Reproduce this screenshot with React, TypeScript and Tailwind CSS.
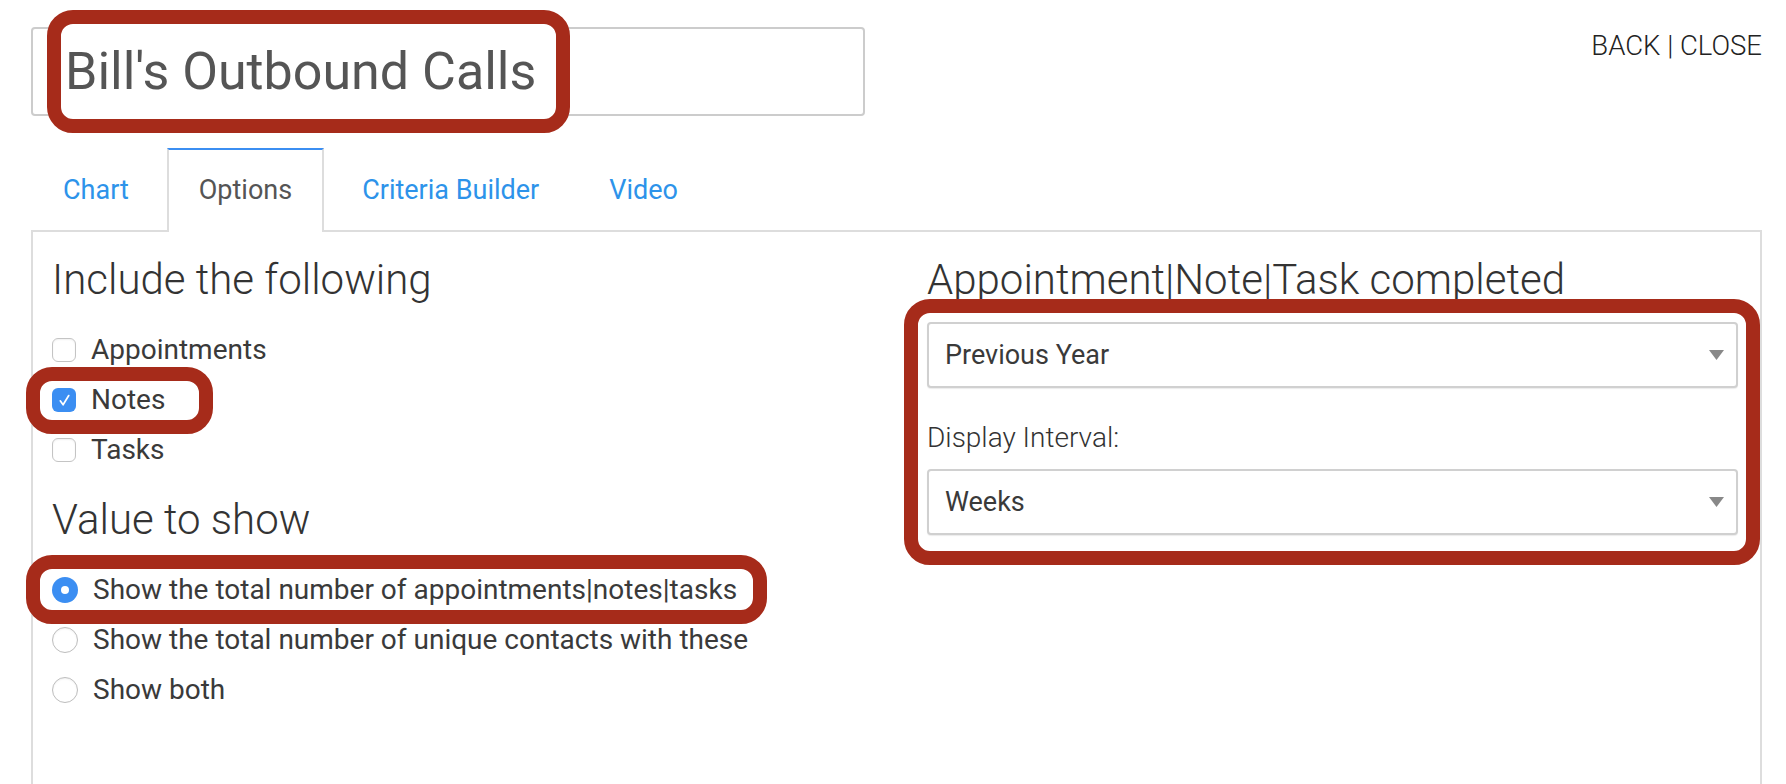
import React from "react";

const red = "border-[#a62b1a]";

function Mark({ className }: { className: string }) {
  // red annotation ring drawn over the screenshot
  return (
    <div
      className={`pointer-events-none absolute rounded-[26px] border-[14px] ${red} bg-white ${className}`}
    />
  );
}

function Checkbox({ checked }: { checked?: boolean }) {
  if (checked) {
    return (
      <span className="relative flex h-[24px] w-[24px] items-center justify-center rounded-[6px] bg-[#3b8ef2]">
        <svg width="17" height="17" viewBox="0 0 24 24" fill="none">
          <path d="M6 12.5l4 5.5L18 5" stroke="#fff" strokeWidth="2.4" strokeLinecap="round" strokeLinejoin="round" />
        </svg>
      </span>
    );
  }
  return (
    <span className="relative h-[24px] w-[24px] rounded-[6px] border border-[#c4c4c4] bg-white shadow-[inset_0_1px_2px_rgba(0,0,0,0.06)]" />
  );
}

function Radio({ checked }: { checked?: boolean }) {
  if (checked) {
    return (
      <span className="relative flex h-[26px] w-[26px] items-center justify-center rounded-full bg-[#3b8ef2]">
        <span className="h-[8px] w-[8px] rounded-full bg-white" />
      </span>
    );
  }
  return (
    <span className="relative h-[26px] w-[26px] rounded-full border border-[#bdbdbd] bg-white shadow-[inset_0_1px_2px_rgba(0,0,0,0.06)]" />
  );
}

function Select({ value }: { value: string }) {
  return (
    <div className="relative flex h-[66px] items-center justify-between rounded-[4px] border-2 border-[#d0d0d0] bg-white pl-[16px] pr-[12px] text-[27px] text-[#3a3a3a] shadow-[0_1px_1px_rgba(0,0,0,0.08)]">
      <span>{value}</span>
      <svg width="15" height="10" viewBox="0 0 15 10">
        <polygon points="0,0 15,0 7.5,10" fill="#888" />
      </svg>
    </div>
  );
}

const tabs = ["Chart", "Options", "Criteria Builder", "Video"];

export default function App() {
  return (
    <div className="h-[784px] w-[1786px] overflow-hidden bg-white font-[Roboto,Arial,sans-serif]">
      {/* Header */}
      <div className="flex items-start justify-between pl-[31px] pr-[24px] pt-[27px]">
        <div className="relative flex h-[89px] w-[834px] items-center rounded-[4px] border-2 border-[#cccccc] pl-[32px]">
          <Mark className="-top-[19px] left-[14px] h-[123px] w-[523px]" />
          <span className="relative text-[52px] leading-none text-[#555]">Bill's Outbound Calls</span>
        </div>
        <div className="mt-[4px] text-[27.5px] font-light leading-[30px] text-[#222]">BACK | CLOSE</div>
      </div>

      {/* Tabs */}
      <div className="mt-[32px] flex pl-[31px]">
        {tabs.map((t) =>
          t === "Options" ? (
            <div
              key={t}
              className="relative z-10 -mb-[2px] mr-[6px] h-[84px] border-x-2 border-t-2 border-x-[#dddddd] border-t-[#3b8ef2] bg-white px-[30px] text-[27px] leading-[80px] text-[#555]"
            >
              {t}
            </div>
          ) : (
            <div
              key={t}
              className="mr-[6px] h-[82px] border-x-2 border-t-2 border-transparent px-[30px] text-[27px] leading-[80px] text-[#2d93ea]"
            >
              {t}
            </div>
          )
        )}
      </div>

      {/* Panel */}
      <div className="ml-[31px] mr-[24px] h-[560px] border-2 border-b-0 border-[#dddddd] pl-[19px] pr-[22px] pt-[24px]">
        <div className="grid grid-cols-[811px_811px] gap-x-[64px]">
          {/* Left column */}
          <div>
            <h2 className="text-[42px] font-light leading-[48px] text-[#333]">Include the following</h2>
            <div className="mt-[21px]">
              <div className="flex h-[50px] items-center gap-[15px] text-[28px] text-[#3a3a3a]">
                <Checkbox />
                <span>Appointments</span>
              </div>
              <div className="relative flex h-[50px] items-center gap-[15px] text-[28px] text-[#3a3a3a]">
                <Mark className="-left-[26px] -top-[8px] h-[67px] w-[187px]" />
                <Checkbox checked />
                <span className="relative">Notes</span>
              </div>
              <div className="flex h-[50px] items-center gap-[15px] text-[28px] text-[#3a3a3a]">
                <Checkbox />
                <span>Tasks</span>
              </div>
            </div>

            <h2 className="mt-[21px] text-[42px] font-light leading-[48px] text-[#333]">Value to show</h2>
            <div className="mt-[21px]">
              <div className="relative flex h-[50px] items-center gap-[15px] text-[28px] text-[#3a3a3a]">
                <Mark className="-left-[26px] -top-[10px] h-[69px] w-[741px]" />
                <Radio checked />
                <span className="relative">Show the total number of appointments|notes|tasks</span>
              </div>
              <div className="flex h-[50px] items-center gap-[15px] text-[28px] text-[#3a3a3a]">
                <Radio />
                <span>Show the total number of unique contacts with these</span>
              </div>
              <div className="flex h-[50px] items-center gap-[15px] text-[28px] text-[#3a3a3a]">
                <Radio />
                <span>Show both</span>
              </div>
            </div>
          </div>

          {/* Right column */}
          <div>
            <h2 className="text-[42px] font-light leading-[48px] text-[#333]">Appointment|Note|Task completed</h2>
            <div className="relative mt-[18px]">
              <Mark className="-left-[23px] -top-[23px] h-[266px] w-[856px]" />
              <Select value="Previous Year" />
              <div className="relative mt-[35px] text-[28px] font-light leading-[30px] text-[#333]">Display Interval:</div>
              <div className="mt-[16px]">
                <Select value="Weeks" />
              </div>
            </div>
          </div>
        </div>
      </div>
    </div>
  );
}
